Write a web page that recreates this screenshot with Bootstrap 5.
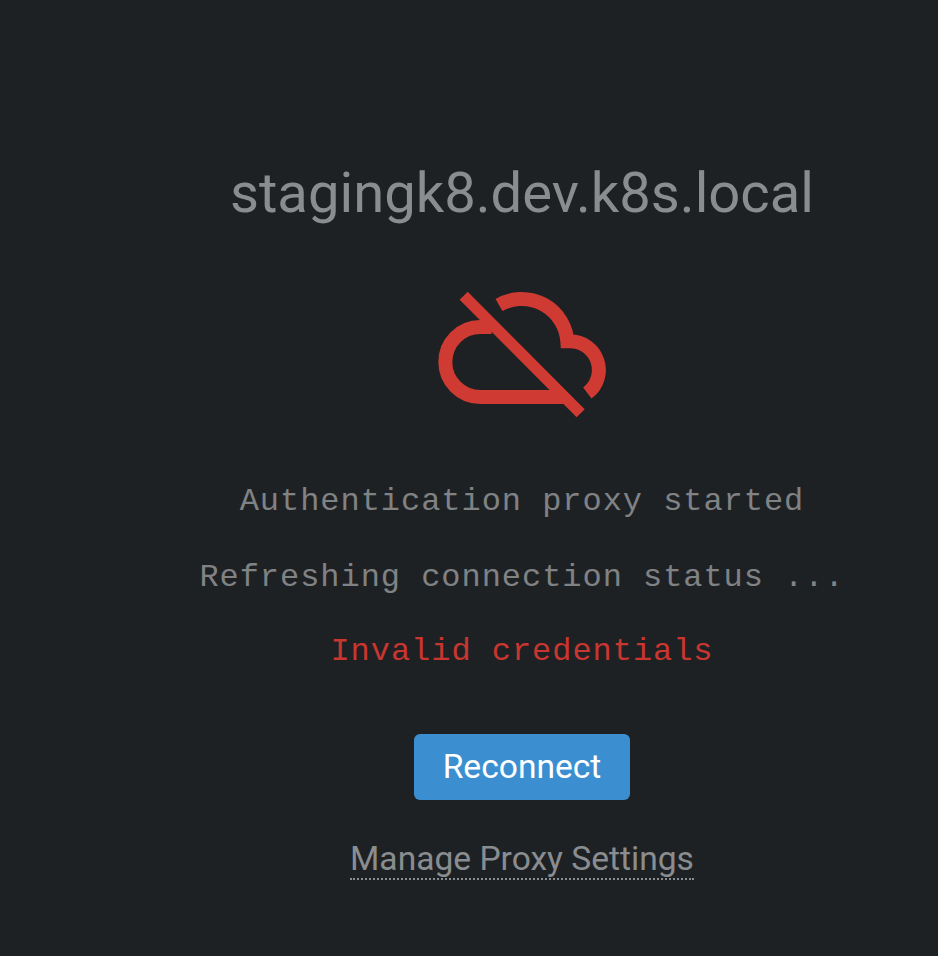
<!DOCTYPE html>
<html lang="en">
<head>
  <meta charset="UTF-8">
  <title>Proxy</title>
  <link href="https://cdn.jsdelivr.net/npm/bootstrap@5.3.2/dist/css/bootstrap.min.css" rel="stylesheet">
  <style>
    body { background-color: #1e2124; }
    .proxy-wrap { width: 938px; height: 956px; padding-left: 106px; padding-top: 160px; }
    .proxy-title { font-family: Roboto, sans-serif; font-size: 56.2px; font-weight: 400; color: #8a8d90; line-height: 66px; margin: 0 0 54px; }
    .proxy-icon { display: block; margin-bottom: 55px; }
    .status-line { font-family: "Liberation Mono", monospace; font-size: 32px; letter-spacing: 0.96px; line-height: 34px; color: #808284; margin: 0; white-space: nowrap; }
    .status-mid { margin: 42px 0 40px; }
    .status-err { color: #c9362f; margin-bottom: 65px; }
    .btn-reconnect { font-family: Roboto, sans-serif; font-size: 33.6px; line-height: 38px; color: #fff; background-color: #3b8fd0; border: 0; border-radius: 6px; width: 216px; height: 66px; padding: 0; margin-bottom: 39px; }
    .proxy-link { font-family: Roboto, sans-serif; font-size: 33.6px; line-height: 39px; color: #8a8d90; text-decoration: none; border-bottom: 2px dotted #8a8d90; }
  </style>
</head>
<body>
  <div class="proxy-wrap d-flex flex-column align-items-center">
    <h1 class="proxy-title">stagingk8.dev.k8s.local</h1>
    <svg class="proxy-icon" width="200" height="150" viewBox="6 0 600 450" fill="none" stroke="#cf3a32" stroke-width="42">
      <path d="M215 141 H181 A105 105 0 0 0 181 351 H430"/>
      <path d="M237 75 A137 137 0 0 1 442 184 H450 A86 86 0 0 1 502 339"/>
      <path d="M131 47 L482 400" stroke-width="34"/>
    </svg>
    <p class="status-line">Authentication proxy started</p>
    <p class="status-line status-mid">Refreshing connection status ...</p>
    <p class="status-line status-err">Invalid credentials</p>
    <button type="button" class="btn btn-reconnect">Reconnect</button>
    <a href="#" class="proxy-link">Manage Proxy Settings</a>
  </div>
  <script src="https://cdn.jsdelivr.net/npm/bootstrap@5.3.2/dist/js/bootstrap.bundle.min.js"></script>
</body>
</html>
